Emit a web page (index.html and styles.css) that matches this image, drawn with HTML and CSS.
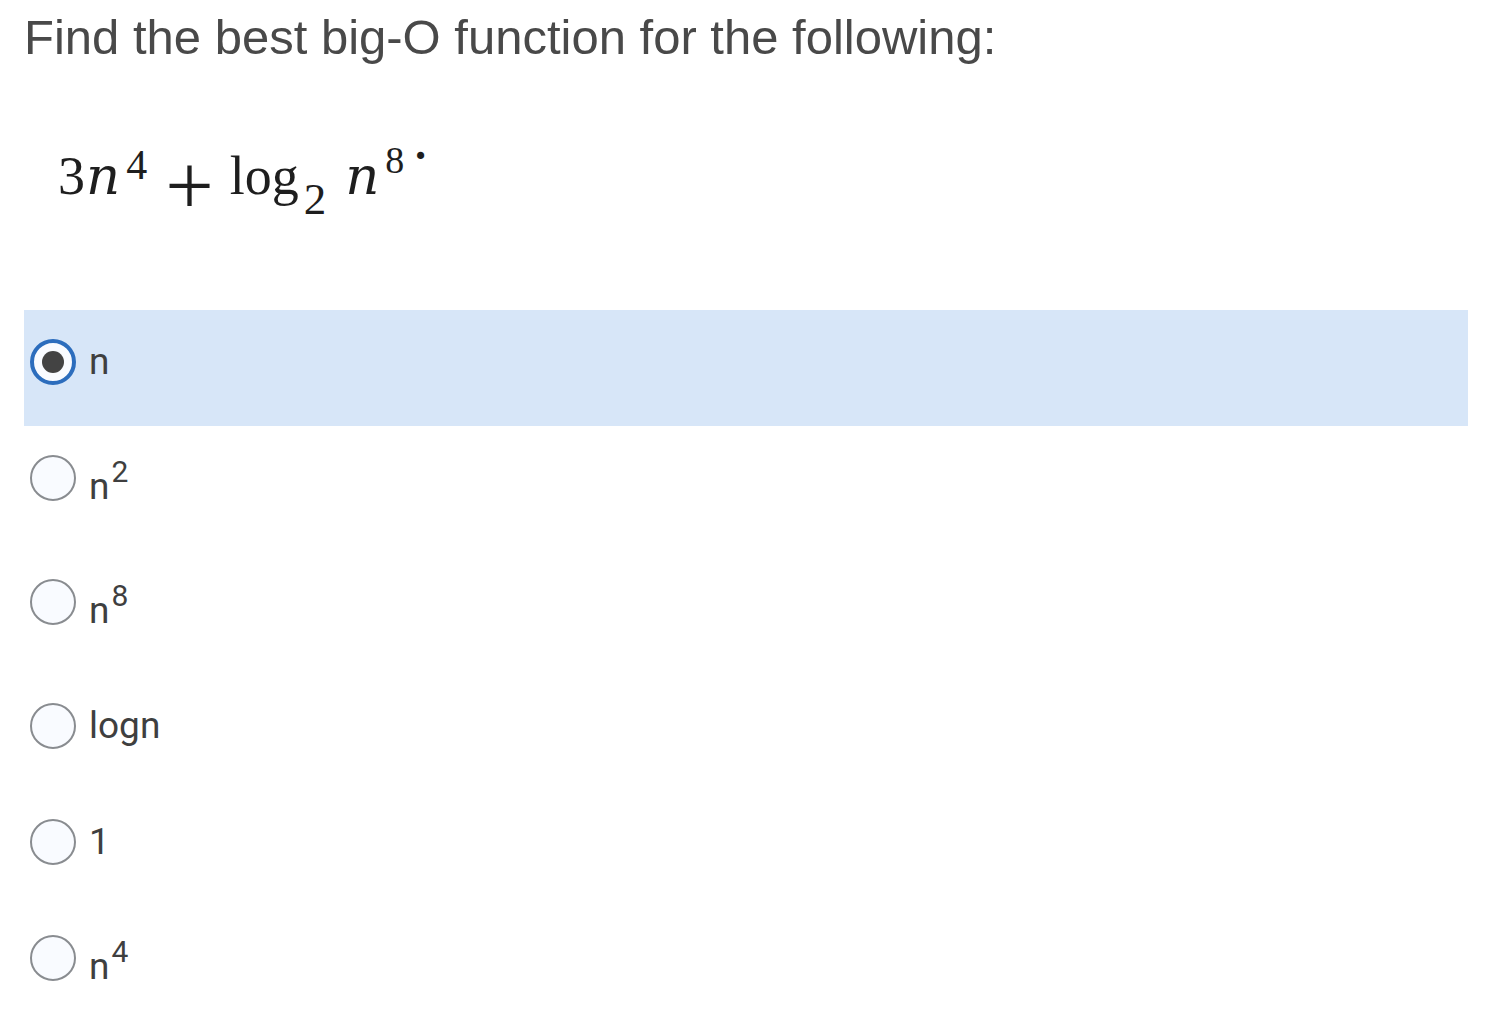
FILE: index.html
```html
<!DOCTYPE html>
<html>
<head>
<meta charset="utf-8">
<link rel="stylesheet" href="styles.css">
</head>
<body>
<div class="page">
  <h1 class="question">Find the best big-O function for the following:</h1>
  <div class="math"><span class="m-num">3</span><span class="m-var">n</span><sup class="m-sup">4</sup><span class="m-op">+</span><span class="m-fn">log</span><sub class="m-sub">2</sub><span class="m-var m-var2">n</span><sup class="m-sup m-sup8">8</sup><span class="m-dot">·</span></div>
  <div class="answers">
    <div class="row selected">
      <span class="radio checked"></span>
      <span class="label">n</span>
    </div>
    <div class="row tall">
      <span class="radio"></span>
      <span class="label">n<sup class="ex">2</sup></span>
    </div>
    <div class="row tall">
      <span class="radio"></span>
      <span class="label">n<sup class="ex">8</sup></span>
    </div>
    <div class="row">
      <span class="radio"></span>
      <span class="label">logn</span>
    </div>
    <div class="row">
      <span class="radio"></span>
      <span class="label">1</span>
    </div>
    <div class="row tall">
      <span class="radio"></span>
      <span class="label">n<sup class="ex">4</sup></span>
    </div>
  </div>
</div>
</body>
</html>
```
FILE: styles.css
```css
html, body {
  margin: 0;
  padding: 0;
  background: #ffffff;
}
.page {
  padding: 0 44px 0 24px;
}
.question {
  margin: 9px 0 0 0;
  font-family: "Liberation Sans", Arial, sans-serif;
  font-weight: normal;
  font-size: 49px;
  line-height: 56px;
  color: #494949;
}
.math {
  margin: 76px 0 0 34px;
  font-family: "Liberation Serif", "Times New Roman", serif;
  font-size: 54px;
  line-height: 70px;
  height: 70px;
  color: #1e1e1e;
  white-space: nowrap;
}
.m-var {
  font-family: "DejaVu Serif", "Liberation Serif", serif;
  font-style: italic;
  font-size: 53px;
  margin-left: 1px;
}
.m-sup {
  font-size: 42px;
  line-height: 0;
  vertical-align: 0;
  position: relative;
  top: -15px;
  margin-left: 6px;
}
.m-sup8 {
  top: -21px;
  font-size: 38px;
  margin-left: 6px;
}
.m-sub {
  font-size: 45px;
  line-height: 0;
  vertical-align: 0;
  position: relative;
  top: 20px;
  margin-left: 5px;
}
.m-op {
  display: inline-block;
  font-size: 86px;
  line-height: 0;
  position: relative;
  top: 21px;
  margin: 0 16px 0 18px;
}
.m-var2 {
  margin-left: 19px;
}
.m-dot {
  margin-left: 9px;
  position: relative;
  top: -24px;
  font-size: 44px;
  font-weight: bold;
}
.answers {
  margin-top: 99px;
  display: flex;
  flex-direction: column;
}
.row {
  display: flex;
  align-items: flex-start;
  height: 116px;
  box-sizing: border-box;
  padding: 29px 0 0 6px;
}
.row.tall {
  height: 124px;
}
.row.selected {
  background: #d7e6f8;
  height: 116px;
}
.radio {
  flex: none;
  width: 46px;
  height: 46px;
  box-sizing: border-box;
  border-radius: 50%;
  border: 2px solid #898c90;
  background: #f9fbff;
}
.radio.checked {
  border: 4px solid #2c6dbd;
  background: #f9fbff;
  display: flex;
  align-items: center;
  justify-content: center;
}
.radio.checked::after {
  content: "";
  width: 22px;
  height: 22px;
  border-radius: 50%;
  background: #434343;
}
.label {
  margin-left: 13px;
  font-family: Roboto, "Liberation Sans", sans-serif;
  font-size: 37px;
  line-height: 46px;
  color: #3f3f3f;
}
.row.tall .label {
  margin-top: 9px;
}
.ex {
  font-size: 30px;
  line-height: 0;
  vertical-align: 0;
  position: relative;
  top: -17px;
  margin-left: 2px;
}
```
